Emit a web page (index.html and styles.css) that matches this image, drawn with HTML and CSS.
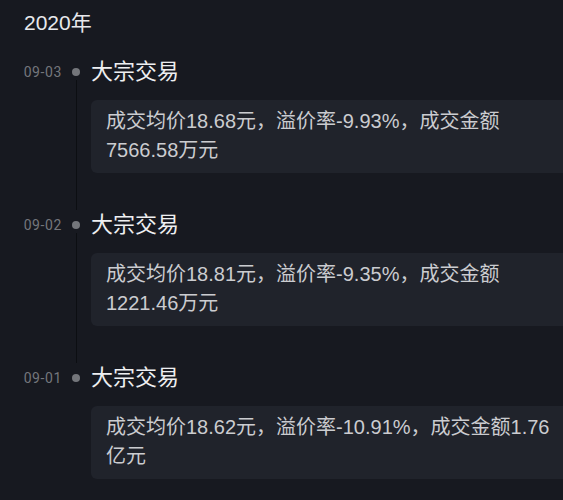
FILE: index.html
```html
<!DOCTYPE html>
<html lang="zh-CN">
<head>
<meta charset="utf-8">
<title>大宗交易</title>
<link rel="stylesheet" href="styles.css">
</head>
<body>
<div class="page">
  <h1 class="year">2020年</h1>
  <div class="timeline">
    <div class="item">
      <div class="date">09-03</div>
      <div class="rail"><span class="dot"></span><span class="line"></span></div>
      <div class="title">大宗交易</div>
      <div class="card">成交均价18.68元，溢价率-9.93%，成交金额7566.58万元</div>
    </div>
    <div class="item">
      <div class="date">09-02</div>
      <div class="rail"><span class="dot"></span><span class="line"></span></div>
      <div class="title">大宗交易</div>
      <div class="card">成交均价18.81元，溢价率-9.35%，成交金额1221.46万元</div>
    </div>
    <div class="item last">
      <div class="date">09-01</div>
      <div class="rail"><span class="dot"></span></div>
      <div class="title">大宗交易</div>
      <div class="card">成交均价18.62元，溢价率-10.91%，成交金额1.76亿元</div>
    </div>
  </div>
</div>
</body>
</html>
```

FILE: styles.css
```css
html, body {
  margin: 0;
  padding: 0;
  background: #171920;
  overflow: hidden;
}
.page {
  width: 563px;
  height: 500px;
  padding-top: 8px;
  box-sizing: border-box;
  font-family: "Liberation Sans", "Noto Sans CJK SC", sans-serif;
  color: #e6e7ea;
}
.year {
  margin: 0 0 19px 24px;
  font-size: 21px;
  line-height: 30px;
  font-weight: 400;
  color: #e8e9ec;
}
.timeline {
  display: flex;
  flex-direction: column;
}
.item {
  display: grid;
  grid-template-columns: 66px 20px 1fr;
  grid-template-rows: 30px auto;
  padding-bottom: 37px;
}
.date {
  grid-column: 1;
  grid-row: 1;
  text-align: right;
  padding-right: 4px;
  font-family: "Roboto", "Noto Sans", sans-serif;
  font-size: 14px;
  line-height: 30px;
  letter-spacing: 0.6px;
  color: #74767c;
}
.rail {
  grid-column: 2;
  grid-row: 1 / span 2;
  display: flex;
  flex-direction: column;
  align-items: center;
  margin-bottom: -37px;
  padding-top: 11px;
}
.dot {
  width: 8px;
  height: 8px;
  border-radius: 50%;
  background: #74767b;
  flex: none;
}
.line {
  flex: 1;
  width: 1px;
  background: #0c0e12;
  margin-top: 4px;
}
.title {
  grid-column: 3;
  grid-row: 1;
  padding-left: 5px;
  font-size: 22px;
  line-height: 30px;
  color: #eeeff1;
}
.card {
  grid-column: 3;
  grid-row: 2;
  margin-top: 13px;
  margin-left: 5px;
  padding: 7px 8px 8px 15px;
  background: #20232b;
  border-radius: 6px 0 0 6px;
  font-size: 20px;
  line-height: 29px;
  color: #cbccd0;
}
```
